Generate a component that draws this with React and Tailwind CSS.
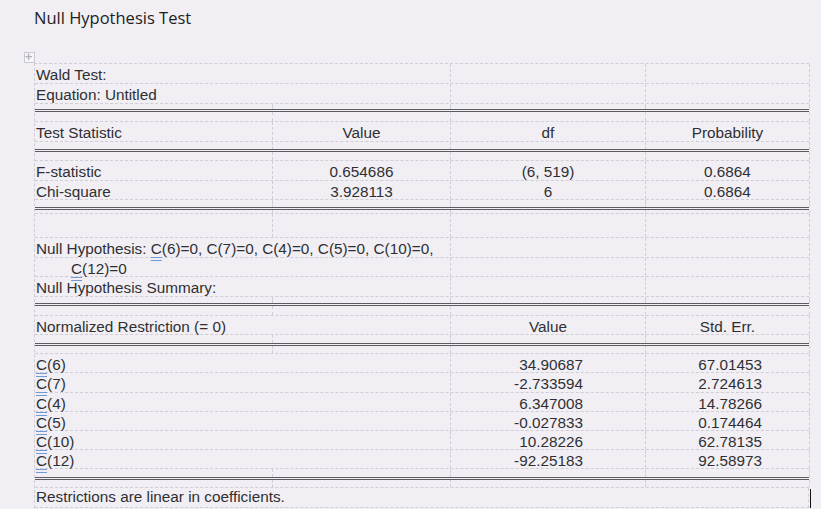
import React from 'react';

const grid = 'grid grid-cols-[238px_178px_195px_164px]';

function Row({ h, double, children }) {
    return (
        <div
            className={`${grid} ${h} ${
                double ? 'border-b-[3px] border-double border-[#5c5c60]' : 'border-b border-dashed border-[#cfcdd5]'
            }`}
        >
            {children}
        </div>
    );
}

function Cell({ className = '', children }) {
    return (
        <div className={`flex h-full items-center whitespace-nowrap border-r border-dashed border-[#cfcdd5] ${className}`}>
            {children}
        </div>
    );
}

function Gap({ h, double }) {
    return (
        <Row h={h} double={double}>
            <Cell />
            <Cell />
            <Cell />
            <Cell />
        </Row>
    );
}

function C({ children }) {
    return (
        <>
            <span className="underline decoration-double decoration-[#6f9ad8] underline-offset-[3px]">C</span>
            {children}
        </>
    );
}

const restrictions = [
    ['6', '34.90687', '67.01453', 'h-[19px]'],
    ['7', '-2.733594', '2.724613', 'h-[20px]'],
    ['4', '6.347008', '14.78266', 'h-[19px]'],
    ['5', '-0.027833', '0.174464', 'h-[19px]'],
    ['10', '10.28226', '62.78135', 'h-[19px]'],
    ['12', '-92.25183', '92.58973', 'h-[19px]'],
];

export default function App() {
    return (
        <div className="h-[509px] w-[821px] overflow-hidden bg-[#f1eff4] font-['Liberation_Sans',Arial,sans-serif] text-[15.3px] text-[#2f2f33]">
            <div className="pl-[34px] pt-[7px]">
                <h1 className="font-['Open_Sans',sans-serif] text-[16.5px] leading-[22px] text-[#222]">Null Hypothesis Test</h1>
            </div>

            <div className="mt-[34px] flex">
                <div className="ml-[24px] mt-[-11px] h-[11px] w-[11px] border border-[#c9c7cf] bg-[#f7f6f9]">
                    <svg viewBox="0 0 11 11" className="h-[9px] w-[9px]" fill="none" stroke="#8a8a90" strokeWidth="0.8">
                        <path d="M4.5 1v7M1 4.5h7M3.5 2l1-1 1 1M3.5 7l1 1 1-1M2 3.5l-1 1 1 1M7 3.5l1 1-1 1" />
                    </svg>
                </div>
            </div>

            <div className="ml-[34px] w-[775px] border-l border-t border-dashed border-[#cfcdd5]">
                <Row h="h-[20px]">
                    <Cell className="col-span-2 pl-px">Wald Test:</Cell>
                    <Cell />
                    <Cell />
                </Row>
                <Row h="h-[20px]">
                    <Cell className="col-span-2 pl-px">Equation: Untitled</Cell>
                    <Cell />
                    <Cell />
                </Row>
                <Gap h="h-[8px]" double />
                <Gap h="h-[10px]" />
                <Row h="h-[20px]">
                    <Cell className="pl-px">Test Statistic</Cell>
                    <Cell className="justify-center">Value</Cell>
                    <Cell className="justify-center">df</Cell>
                    <Cell className="justify-center">Probability</Cell>
                </Row>
                <Gap h="h-[10px]" double />
                <Gap h="h-[9px]" />
                <Row h="h-[20px]">
                    <Cell className="pl-px">F-statistic</Cell>
                    <Cell className="justify-center">0.654686</Cell>
                    <Cell className="justify-center">(6, 519)</Cell>
                    <Cell className="justify-center">0.6864</Cell>
                </Row>
                <Row h="h-[19px]">
                    <Cell className="pl-px">Chi-square</Cell>
                    <Cell className="justify-center">3.928113</Cell>
                    <Cell className="justify-center">6</Cell>
                    <Cell className="justify-center">0.6864</Cell>
                </Row>
                <Gap h="h-[10px]" double />
                <Gap h="h-[4px]" />
                <Gap h="h-[24px]" />
                <Row h="h-[20px]">
                    <Cell className="col-span-2 pl-px">
                        Null Hypothesis:&nbsp;<C>(6)=0, C(7)=0, C(4)=0, C(5)=0, C(10)=0,</C>
                    </Cell>
                    <Cell />
                    <Cell />
                </Row>
                <Row h="h-[19px]">
                    <Cell className="col-span-2 pl-[36px]">
                        <C>(12)=0</C>
                    </Cell>
                    <Cell />
                    <Cell />
                </Row>
                <Row h="h-[20px]">
                    <Cell className="col-span-2 pl-px">Null Hypothesis Summary:</Cell>
                    <Cell />
                    <Cell />
                </Row>
                <Gap h="h-[9px]" double />
                <Gap h="h-[10px]" />
                <Row h="h-[19px]">
                    <Cell className="col-span-2 pl-px">Normalized Restriction (= 0)</Cell>
                    <Cell className="justify-center">Value</Cell>
                    <Cell className="justify-center">Std. Err.</Cell>
                </Row>
                <Gap h="h-[11px]" double />
                <Gap h="h-[8px]" />
                {restrictions.map(([n, value, err, h]) => (
                    <Row key={n} h={h}>
                        <Cell className="col-span-2 pl-px">
                            <C>({n})</C>
                        </Cell>
                        <Cell className="justify-end pr-[62px]">{value}</Cell>
                        <Cell className="justify-end pr-[47px]">{err}</Cell>
                    </Row>
                ))}
                <Gap h="h-[11px]" double />
                <Gap h="h-[8px]" />
                <div className="relative flex h-[20px] items-center border-b border-r border-dashed border-[#cfcdd5] pl-px">
                    Restrictions are linear in coefficients.
                    <span className="absolute right-[-3px] top-px h-[19px] w-px bg-[#111]" />
                </div>
            </div>
        </div>
    );
}
